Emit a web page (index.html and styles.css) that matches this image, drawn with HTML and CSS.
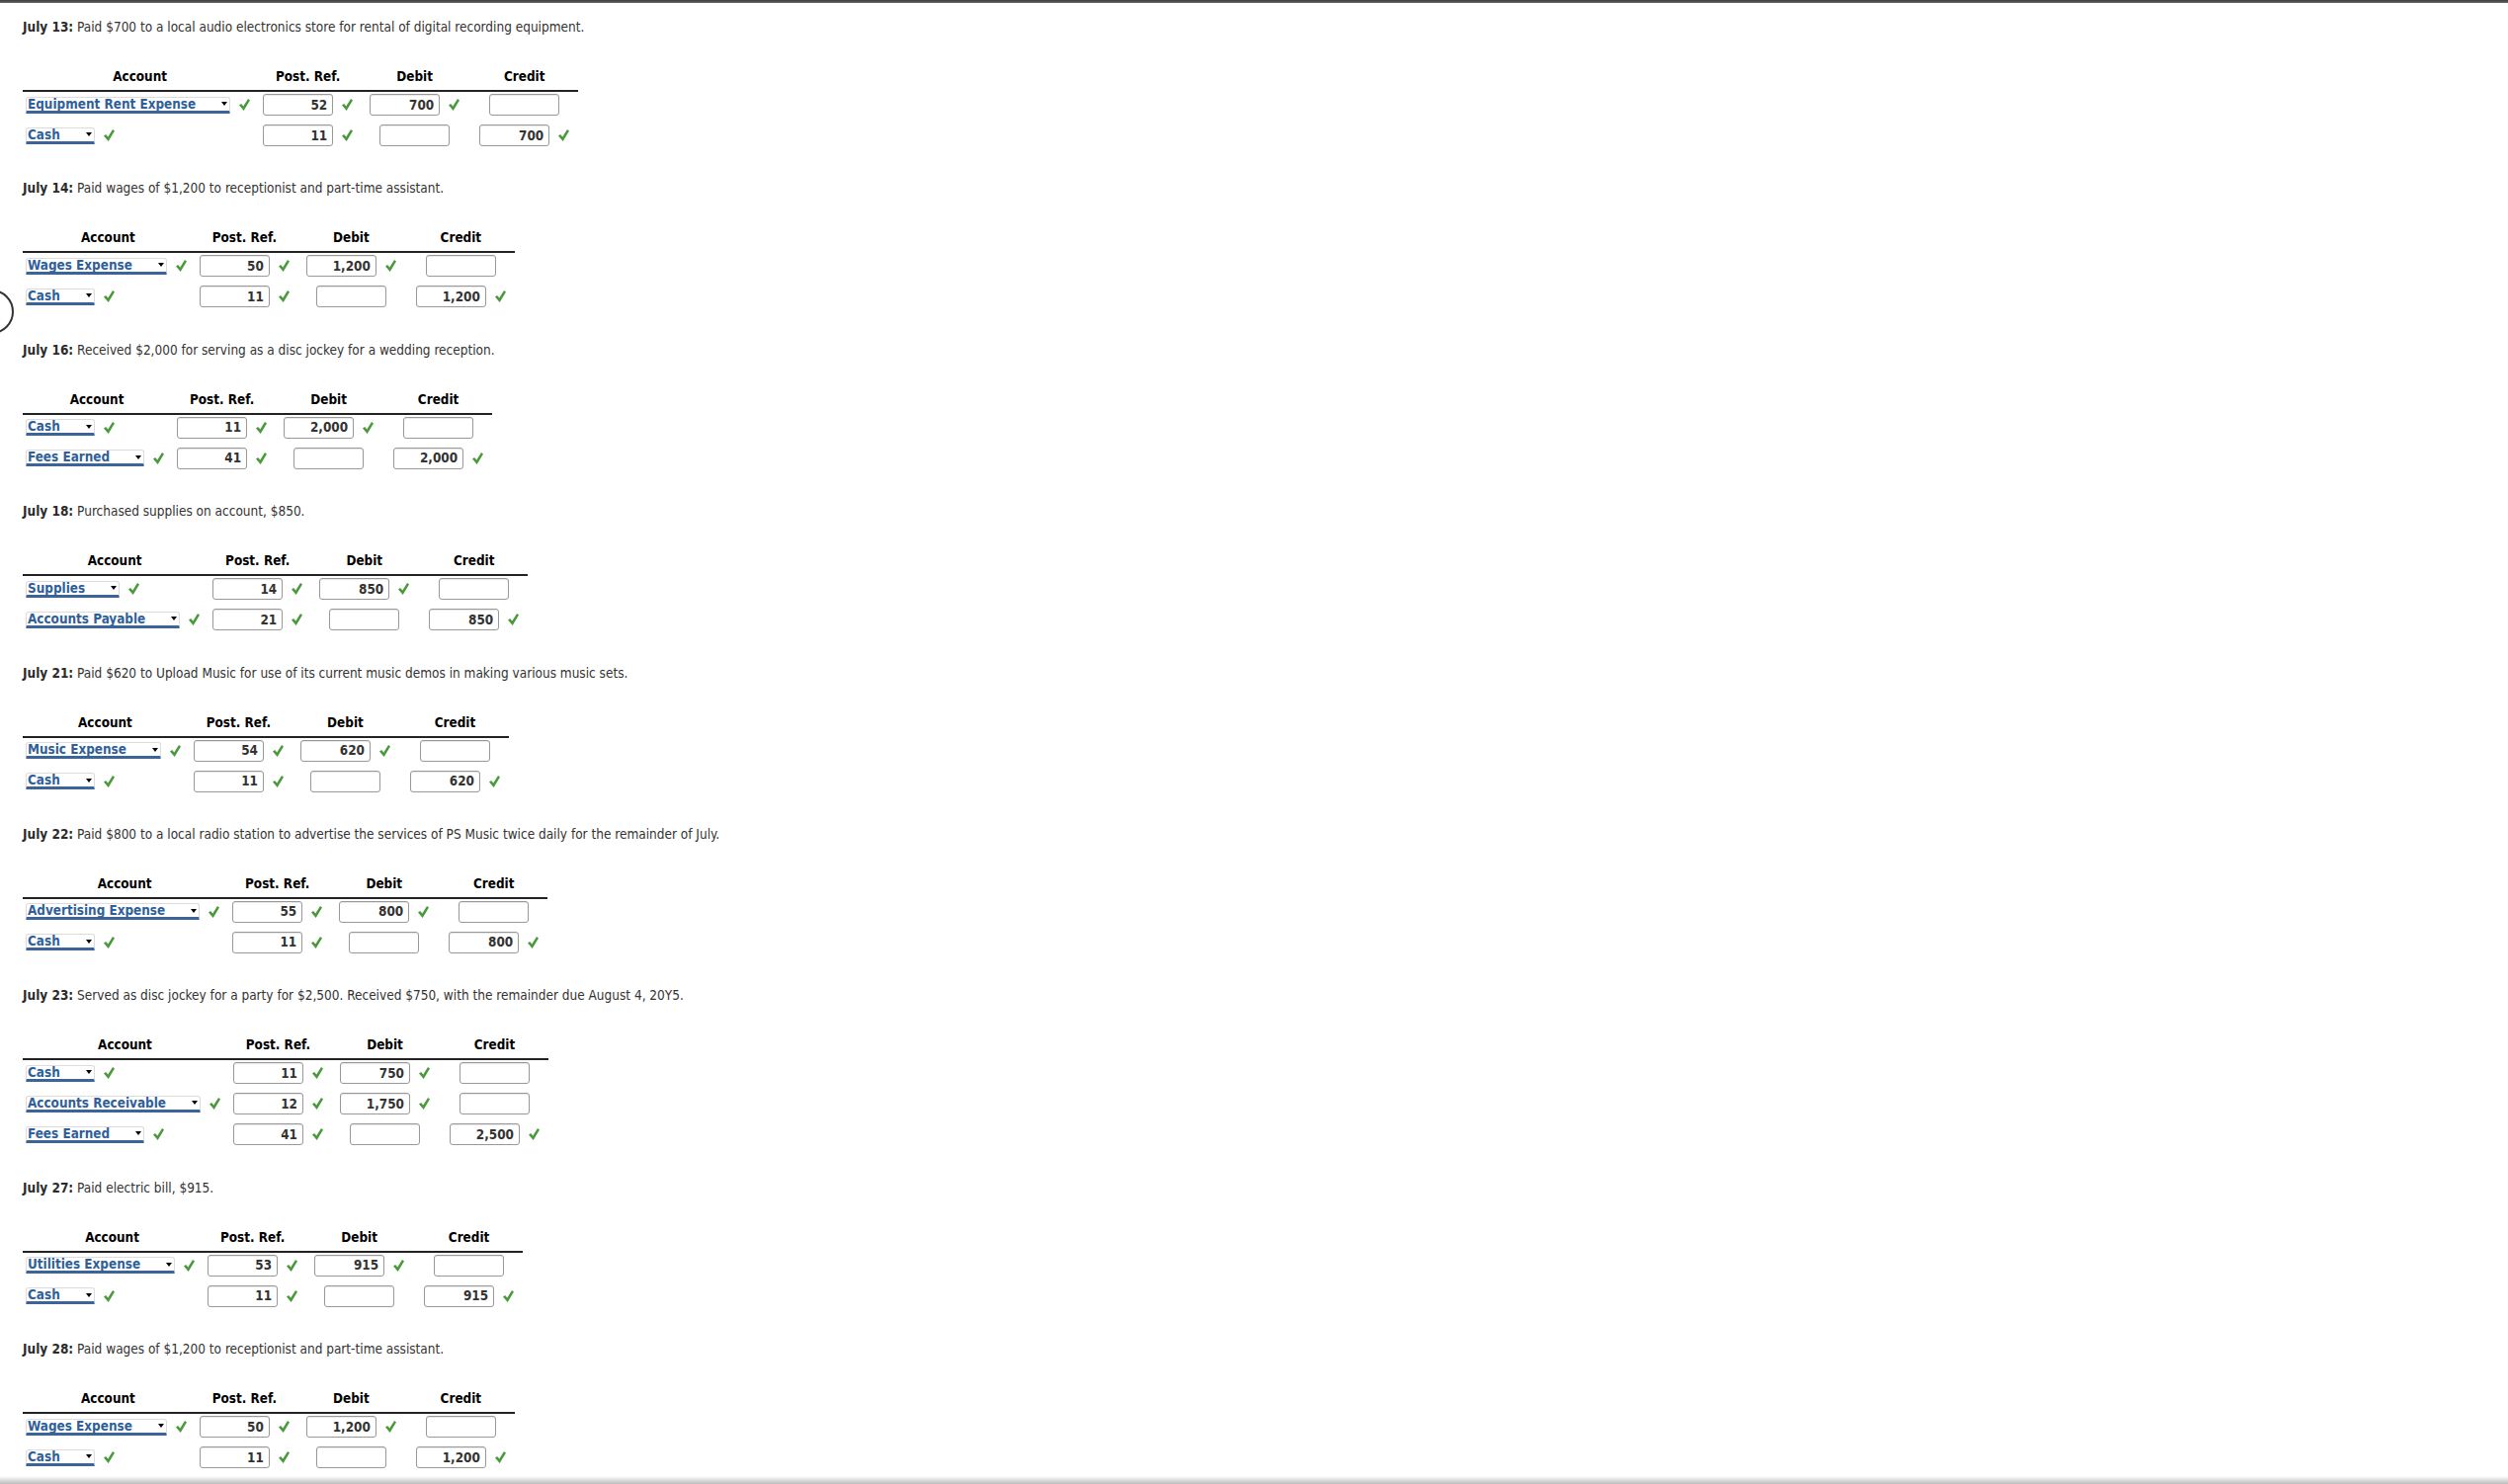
FILE: index.html
```html
<!DOCTYPE html>
<html lang="en">
<head>
<meta charset="utf-8">
<title>Journal Entries</title>
<link rel="stylesheet" href="styles.css">
</head>
<body>
<svg class="defs" width="0" height="0" aria-hidden="true">
  <defs>
    <symbol id="ck" viewBox="0 0 11 12">
      <path d="M0 6.6 L2.1 4.9 L4.3 7.5 L9.0 0 L11 1.4 L4.7 12 Z"/>
    </symbol>
  </defs>
</svg>
<div class="topbar"></div>
<div class="ring"></div>
<main class="page">

  <section class="entry">
    <p class="desc"><b>July 13:</b> Paid $700 to a local audio electronics store for rental of digital recording equipment.</p>
    <table class="jt">
      <thead><tr><th>Account</th><th class="w-ref">Post. Ref.</th><th class="w-dr">Debit</th><th class="w-cr">Credit</th></tr></thead>
      <tbody>
        <tr>
          <td><div class="cell acct"><span class="sel">Equipment Rent Expense</span><svg class="ck"><use href="#ck"/></svg></div></td>
          <td><div class="cell"><input class="amt" value="52" readonly><svg class="ck"><use href="#ck"/></svg></div></td>
          <td><div class="cell"><input class="amt" value="700" readonly><svg class="ck"><use href="#ck"/></svg></div></td>
          <td><div class="cell"><input class="amt" value="" readonly></div></td>
        </tr>
        <tr>
          <td><div class="cell acct"><span class="sel">Cash</span><svg class="ck"><use href="#ck"/></svg></div></td>
          <td><div class="cell"><input class="amt" value="11" readonly><svg class="ck"><use href="#ck"/></svg></div></td>
          <td><div class="cell"><input class="amt" value="" readonly></div></td>
          <td><div class="cell"><input class="amt" value="700" readonly><svg class="ck"><use href="#ck"/></svg></div></td>
        </tr>
      </tbody>
    </table>
  </section>

  <section class="entry">
    <p class="desc"><b>July 14:</b> Paid wages of $1,200 to receptionist and part-time assistant.</p>
    <table class="jt">
      <thead><tr><th>Account</th><th class="w-ref">Post. Ref.</th><th class="w-dr">Debit</th><th class="w-cr">Credit</th></tr></thead>
      <tbody>
        <tr>
          <td><div class="cell acct"><span class="sel">Wages Expense</span><svg class="ck"><use href="#ck"/></svg></div></td>
          <td><div class="cell"><input class="amt" value="50" readonly><svg class="ck"><use href="#ck"/></svg></div></td>
          <td><div class="cell"><input class="amt" value="1,200" readonly><svg class="ck"><use href="#ck"/></svg></div></td>
          <td><div class="cell"><input class="amt" value="" readonly></div></td>
        </tr>
        <tr>
          <td><div class="cell acct"><span class="sel">Cash</span><svg class="ck"><use href="#ck"/></svg></div></td>
          <td><div class="cell"><input class="amt" value="11" readonly><svg class="ck"><use href="#ck"/></svg></div></td>
          <td><div class="cell"><input class="amt" value="" readonly></div></td>
          <td><div class="cell"><input class="amt" value="1,200" readonly><svg class="ck"><use href="#ck"/></svg></div></td>
        </tr>
      </tbody>
    </table>
  </section>

  <section class="entry">
    <p class="desc"><b>July 16:</b> Received $2,000 for serving as a disc jockey for a wedding reception.</p>
    <table class="jt">
      <thead><tr><th>Account</th><th class="w-ref">Post. Ref.</th><th class="w-dr">Debit</th><th class="w-cr">Credit</th></tr></thead>
      <tbody>
        <tr>
          <td><div class="cell acct"><span class="sel">Cash</span><svg class="ck"><use href="#ck"/></svg></div></td>
          <td><div class="cell"><input class="amt" value="11" readonly><svg class="ck"><use href="#ck"/></svg></div></td>
          <td><div class="cell"><input class="amt" value="2,000" readonly><svg class="ck"><use href="#ck"/></svg></div></td>
          <td><div class="cell"><input class="amt" value="" readonly></div></td>
        </tr>
        <tr>
          <td><div class="cell acct"><span class="sel">Fees Earned</span><svg class="ck"><use href="#ck"/></svg></div></td>
          <td><div class="cell"><input class="amt" value="41" readonly><svg class="ck"><use href="#ck"/></svg></div></td>
          <td><div class="cell"><input class="amt" value="" readonly></div></td>
          <td><div class="cell"><input class="amt" value="2,000" readonly><svg class="ck"><use href="#ck"/></svg></div></td>
        </tr>
      </tbody>
    </table>
  </section>

  <section class="entry">
    <p class="desc"><b>July 18:</b> Purchased supplies on account, $850.</p>
    <table class="jt">
      <thead><tr><th>Account</th><th class="w-ref">Post. Ref.</th><th class="w-dr">Debit</th><th class="w-cr">Credit</th></tr></thead>
      <tbody>
        <tr>
          <td><div class="cell acct"><span class="sel">Supplies</span><svg class="ck"><use href="#ck"/></svg></div></td>
          <td><div class="cell"><input class="amt" value="14" readonly><svg class="ck"><use href="#ck"/></svg></div></td>
          <td><div class="cell"><input class="amt" value="850" readonly><svg class="ck"><use href="#ck"/></svg></div></td>
          <td><div class="cell"><input class="amt" value="" readonly></div></td>
        </tr>
        <tr>
          <td><div class="cell acct"><span class="sel">Accounts Payable</span><svg class="ck"><use href="#ck"/></svg></div></td>
          <td><div class="cell"><input class="amt" value="21" readonly><svg class="ck"><use href="#ck"/></svg></div></td>
          <td><div class="cell"><input class="amt" value="" readonly></div></td>
          <td><div class="cell"><input class="amt" value="850" readonly><svg class="ck"><use href="#ck"/></svg></div></td>
        </tr>
      </tbody>
    </table>
  </section>

  <section class="entry">
    <p class="desc"><b>July 21:</b> Paid $620 to Upload Music for use of its current music demos in making various music sets.</p>
    <table class="jt">
      <thead><tr><th>Account</th><th class="w-ref">Post. Ref.</th><th class="w-dr">Debit</th><th class="w-cr">Credit</th></tr></thead>
      <tbody>
        <tr>
          <td><div class="cell acct"><span class="sel">Music Expense</span><svg class="ck"><use href="#ck"/></svg></div></td>
          <td><div class="cell"><input class="amt" value="54" readonly><svg class="ck"><use href="#ck"/></svg></div></td>
          <td><div class="cell"><input class="amt" value="620" readonly><svg class="ck"><use href="#ck"/></svg></div></td>
          <td><div class="cell"><input class="amt" value="" readonly></div></td>
        </tr>
        <tr>
          <td><div class="cell acct"><span class="sel">Cash</span><svg class="ck"><use href="#ck"/></svg></div></td>
          <td><div class="cell"><input class="amt" value="11" readonly><svg class="ck"><use href="#ck"/></svg></div></td>
          <td><div class="cell"><input class="amt" value="" readonly></div></td>
          <td><div class="cell"><input class="amt" value="620" readonly><svg class="ck"><use href="#ck"/></svg></div></td>
        </tr>
      </tbody>
    </table>
  </section>

  <section class="entry">
    <p class="desc"><b>July 22:</b> Paid $800 to a local radio station to advertise the services of PS Music twice daily for the remainder of July.</p>
    <table class="jt">
      <thead><tr><th>Account</th><th class="w-ref">Post. Ref.</th><th class="w-dr">Debit</th><th class="w-cr">Credit</th></tr></thead>
      <tbody>
        <tr>
          <td><div class="cell acct"><span class="sel">Advertising Expense</span><svg class="ck"><use href="#ck"/></svg></div></td>
          <td><div class="cell"><input class="amt" value="55" readonly><svg class="ck"><use href="#ck"/></svg></div></td>
          <td><div class="cell"><input class="amt" value="800" readonly><svg class="ck"><use href="#ck"/></svg></div></td>
          <td><div class="cell"><input class="amt" value="" readonly></div></td>
        </tr>
        <tr>
          <td><div class="cell acct"><span class="sel">Cash</span><svg class="ck"><use href="#ck"/></svg></div></td>
          <td><div class="cell"><input class="amt" value="11" readonly><svg class="ck"><use href="#ck"/></svg></div></td>
          <td><div class="cell"><input class="amt" value="" readonly></div></td>
          <td><div class="cell"><input class="amt" value="800" readonly><svg class="ck"><use href="#ck"/></svg></div></td>
        </tr>
      </tbody>
    </table>
  </section>

  <section class="entry">
    <p class="desc"><b>July 23:</b> Served as disc jockey for a party for $2,500. Received $750, with the remainder due August 4, 20Y5.</p>
    <table class="jt">
      <thead><tr><th>Account</th><th class="w-ref">Post. Ref.</th><th class="w-dr">Debit</th><th class="w-cr">Credit</th></tr></thead>
      <tbody>
        <tr>
          <td><div class="cell acct"><span class="sel">Cash</span><svg class="ck"><use href="#ck"/></svg></div></td>
          <td><div class="cell"><input class="amt" value="11" readonly><svg class="ck"><use href="#ck"/></svg></div></td>
          <td><div class="cell"><input class="amt" value="750" readonly><svg class="ck"><use href="#ck"/></svg></div></td>
          <td><div class="cell"><input class="amt" value="" readonly></div></td>
        </tr>
        <tr>
          <td><div class="cell acct"><span class="sel">Accounts Receivable</span><svg class="ck"><use href="#ck"/></svg></div></td>
          <td><div class="cell"><input class="amt" value="12" readonly><svg class="ck"><use href="#ck"/></svg></div></td>
          <td><div class="cell"><input class="amt" value="1,750" readonly><svg class="ck"><use href="#ck"/></svg></div></td>
          <td><div class="cell"><input class="amt" value="" readonly></div></td>
        </tr>
        <tr>
          <td><div class="cell acct"><span class="sel">Fees Earned</span><svg class="ck"><use href="#ck"/></svg></div></td>
          <td><div class="cell"><input class="amt" value="41" readonly><svg class="ck"><use href="#ck"/></svg></div></td>
          <td><div class="cell"><input class="amt" value="" readonly></div></td>
          <td><div class="cell"><input class="amt" value="2,500" readonly><svg class="ck"><use href="#ck"/></svg></div></td>
        </tr>
      </tbody>
    </table>
  </section>

  <section class="entry">
    <p class="desc"><b>July 27:</b> Paid electric bill, $915.</p>
    <table class="jt">
      <thead><tr><th>Account</th><th class="w-ref">Post. Ref.</th><th class="w-dr">Debit</th><th class="w-cr">Credit</th></tr></thead>
      <tbody>
        <tr>
          <td><div class="cell acct"><span class="sel">Utilities Expense</span><svg class="ck"><use href="#ck"/></svg></div></td>
          <td><div class="cell"><input class="amt" value="53" readonly><svg class="ck"><use href="#ck"/></svg></div></td>
          <td><div class="cell"><input class="amt" value="915" readonly><svg class="ck"><use href="#ck"/></svg></div></td>
          <td><div class="cell"><input class="amt" value="" readonly></div></td>
        </tr>
        <tr>
          <td><div class="cell acct"><span class="sel">Cash</span><svg class="ck"><use href="#ck"/></svg></div></td>
          <td><div class="cell"><input class="amt" value="11" readonly><svg class="ck"><use href="#ck"/></svg></div></td>
          <td><div class="cell"><input class="amt" value="" readonly></div></td>
          <td><div class="cell"><input class="amt" value="915" readonly><svg class="ck"><use href="#ck"/></svg></div></td>
        </tr>
      </tbody>
    </table>
  </section>

  <section class="entry">
    <p class="desc"><b>July 28:</b> Paid wages of $1,200 to receptionist and part-time assistant.</p>
    <table class="jt">
      <thead><tr><th>Account</th><th class="w-ref">Post. Ref.</th><th class="w-dr">Debit</th><th class="w-cr">Credit</th></tr></thead>
      <tbody>
        <tr>
          <td><div class="cell acct"><span class="sel">Wages Expense</span><svg class="ck"><use href="#ck"/></svg></div></td>
          <td><div class="cell"><input class="amt" value="50" readonly><svg class="ck"><use href="#ck"/></svg></div></td>
          <td><div class="cell"><input class="amt" value="1,200" readonly><svg class="ck"><use href="#ck"/></svg></div></td>
          <td><div class="cell"><input class="amt" value="" readonly></div></td>
        </tr>
        <tr>
          <td><div class="cell acct"><span class="sel">Cash</span><svg class="ck"><use href="#ck"/></svg></div></td>
          <td><div class="cell"><input class="amt" value="11" readonly><svg class="ck"><use href="#ck"/></svg></div></td>
          <td><div class="cell"><input class="amt" value="" readonly></div></td>
          <td><div class="cell"><input class="amt" value="1,200" readonly><svg class="ck"><use href="#ck"/></svg></div></td>
        </tr>
      </tbody>
    </table>
  </section>

</main>
<div class="bottom-shade"></div>
</body>
</html>
```

FILE: styles.css
```css
* { box-sizing: border-box; }

html, body {
  margin: 0;
  padding: 0;
  background: #fff;
}

body {
  font-family: "DejaVu Sans Condensed", "DejaVu Sans", sans-serif;
  font-stretch: condensed;
  font-size: 13.4px;
  color: #333;
  position: relative;
}

.defs {
  position: absolute;
  width: 0;
  height: 0;
  overflow: hidden;
}

.topbar {
  height: 3px;
  background: linear-gradient(#3c3c3c, #666);
}

.ring {
  position: absolute;
  left: -31px;
  top: 293px;
  width: 45px;
  height: 45px;
  border: 2.5px solid #333;
  border-radius: 50%;
}

.page {
  padding: 16px 0 0 23px;
}

.entry {
  margin-bottom: 27.4px;
}

.entry:last-child {
  margin-bottom: 0;
}

.desc {
  margin: 0;
  font-size: 13.5px;
  line-height: 16px;
  color: #333;
}

.desc b {
  color: #2b2b2b;
}

.jt {
  border-collapse: collapse;
  margin-top: 35px;
}

.jt th {
  font-weight: bold;
  color: #000;
  line-height: 16px;
  padding: 0 0 5px;
  border-bottom: 2px solid #222;
  text-align: center;
  white-space: nowrap;
}

.jt td {
  padding: 0;
  vertical-align: top;
}

.w-ref { width: 103px; }
.w-dr { width: 113px; }
.w-cr { width: 109px; }

.cell {
  display: flex;
  align-items: center;
  justify-content: center;
  height: 31px;
  padding: 2px 0 7px;
}

.cell.acct {
  justify-content: flex-start;
  padding-left: 3px;
  padding-right: 7px;
}

.sel {
  position: relative;
  display: inline-block;
  flex: none;
  white-space: nowrap;
  font-weight: bold;
  color: #2f5f9b;
  line-height: 12px;
  padding: 1px 34px 0 1px;
  background: #fff;
  border: 1px solid #dcdcdc;
  border-bottom: 3px solid #3a649a;
  border-radius: 3px 3px 1px 1px;
}

.sel::after {
  content: "";
  position: absolute;
  right: 2px;
  top: 50%;
  margin-top: -2px;
  border-left: 3px solid transparent;
  border-right: 3px solid transparent;
  border-top: 4px solid #000;
}

.ck {
  flex: none;
  width: 11px;
  height: 12px;
  margin-left: 9px;
  fill: #4a9a3c;
}

.amt {
  flex: none;
  width: 71px;
  height: 22px;
  margin: 0;
  padding: 0 5px;
  border: 1px solid #999;
  border-radius: 3px;
  box-shadow: inset 0 1px 1px rgba(0, 0, 0, 0.1);
  background: #fff;
  font-family: "DejaVu Sans Condensed", "DejaVu Sans", sans-serif;
  font-stretch: condensed;
  font-size: 13.4px;
  font-weight: bold;
  color: #333;
  text-align: right;
  outline: none;
}

.bottom-shade {
  position: fixed;
  left: 0;
  right: 0;
  bottom: 0;
  height: 8px;
  background: linear-gradient(rgba(210, 210, 210, 0), #bcbcbc);
}
```
